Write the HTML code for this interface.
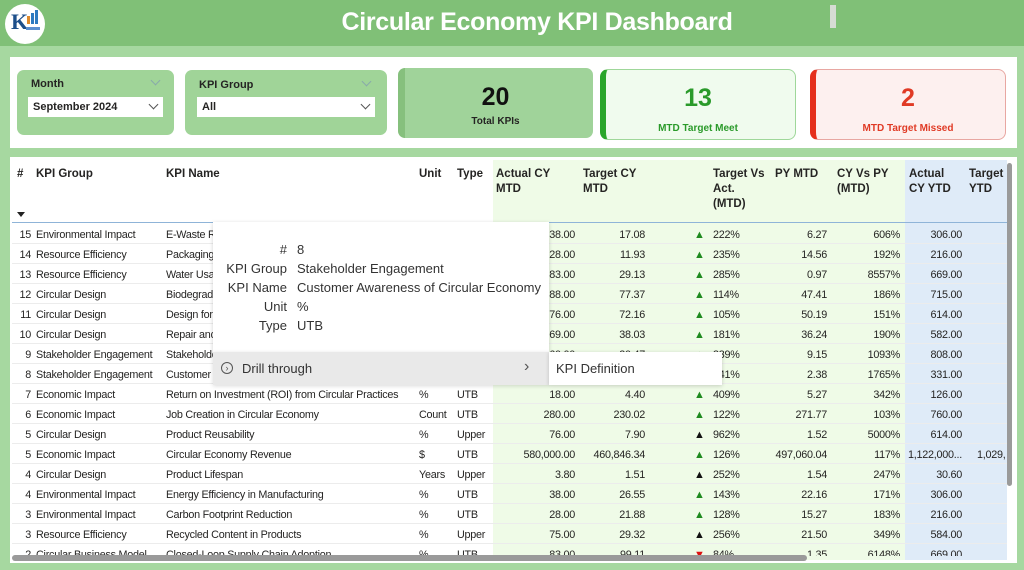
<!DOCTYPE html>
<html><head><meta charset="utf-8"><style>
*{margin:0;padding:0;box-sizing:border-box}
body{width:1024px;height:570px;overflow:hidden;background:#a6d8a0;font-family:"Liberation Sans",sans-serif;color:#252423;position:relative}
.abs{position:absolute}
.hdr{left:0;top:0;width:1024px;height:46px;background:#80c077}
.title{left:0;width:1074px;top:8px;text-align:center;color:#fff;font-size:25px;font-weight:bold;letter-spacing:-0.3px}
.panel{background:#fff}
.slicer{background:#a0d498;border-radius:7px}
.sl-l{font-size:11px;font-weight:bold}
.sl-b{background:#fff;font-size:11px;font-weight:bold;height:20px;padding:4px 5px}
.chev{width:7px;height:7px;border-right:1px solid #555;border-bottom:1px solid #555;transform:rotate(45deg)}
.row{position:absolute;left:12px;width:995px;height:20px;font-size:10.8px;letter-spacing:-0.25px;border-bottom:1px solid #ececec;line-height:19px}
.row div{position:absolute;top:2px;white-space:nowrap}
.r{text-align:right}
.h{position:absolute;font-size:11.5px;font-weight:bold;line-height:15px}
.up{color:#1f8a1f;font-size:11px}
.bk{color:#111;font-size:11px}
.dn{color:#d11;font-size:11px}
</style></head><body>
<div class="abs hdr"></div>
<div class="abs" style="left:5px;top:4px;width:40px;height:40px;border-radius:50%;background:#fff"></div>
<div class="abs" style="left:11px;top:9px;font:bold 22px 'Liberation Serif',serif;color:#1d4f8a">K</div>
<div class="abs" style="left:27px;top:16px;width:3px;height:8px;background:#e08a2a"></div>
<div class="abs" style="left:31px;top:13px;width:3px;height:11px;background:#2d7ac0"></div>
<div class="abs" style="left:35px;top:10px;width:3px;height:14px;background:#2d7ac0"></div>
<div class="abs" style="left:26px;top:27px;width:14px;height:3px;background:#5a8fd0"></div>
<div class="abs title">Circular Economy KPI Dashboard</div>
<div class="abs" style="left:830px;top:5px;width:6px;height:23px;background:#d6dcd4"></div>

<div class="abs panel" style="left:10px;top:57px;width:1007px;height:91px"></div>
<div class="abs slicer" style="left:17px;top:70px;width:157px;height:65px"></div>
<div class="abs sl-l" style="left:31px;top:78px">Month</div>
<div class="abs chev" style="left:152px;top:77px;border-color:#8aa"></div>
<div class="abs sl-b" style="left:28px;top:97px;width:135px">September 2024</div>
<div class="abs chev" style="left:150px;top:101px"></div>
<div class="abs slicer" style="left:185px;top:70px;width:202px;height:65px"></div>
<div class="abs sl-l" style="left:199px;top:79px">KPI Group</div>
<div class="abs chev" style="left:363px;top:78px;border-color:#8aa"></div>
<div class="abs sl-b" style="left:197px;top:97px;width:178px">All</div>
<div class="abs chev" style="left:362px;top:101px"></div>

<div class="abs" style="left:398px;top:68px;width:195px;height:70px;background:#a0d39a;border-radius:7px;border-left:7px solid #86c07d"></div>
<div class="abs" style="left:398px;top:83px;width:195px;text-align:center;font-size:25px;font-weight:bold;color:#111">20</div>
<div class="abs" style="left:398px;top:116px;width:195px;text-align:center;font-size:10px;font-weight:bold">Total KPIs</div>

<div class="abs" style="left:600px;top:69px;width:196px;height:71px;background:#f0fbee;border:1px solid #9fd79a;border-left:6px solid #2aa52a;border-radius:8px"></div>
<div class="abs" style="left:600px;top:84px;width:196px;text-align:center;font-size:25px;font-weight:bold;color:#2a9a2a">13</div>
<div class="abs" style="left:600px;top:123px;width:196px;text-align:center;font-size:10px;font-weight:bold;color:#2a9a2a">MTD Target Meet</div>

<div class="abs" style="left:810px;top:69px;width:196px;height:71px;background:#fdf0ef;border:1px solid #e8a7a2;border-left:6px solid #e5301d;border-radius:8px"></div>
<div class="abs" style="left:810px;top:84px;width:196px;text-align:center;font-size:25px;font-weight:bold;color:#e03a25">2</div>
<div class="abs" style="left:810px;top:123px;width:196px;text-align:center;font-size:10px;font-weight:bold;color:#e03a25">MTD Target Missed</div>

<div class="abs panel" style="left:10px;top:157px;width:1007px;height:406px"></div>
<div class="abs" style="left:493px;top:160px;width:412px;height:400px;background:#effbe7"></div>
<div class="abs" style="left:905px;top:160px;width:102px;height:400px;background:#dfebf8"></div>

<div class="h" style="left:17px;top:167px">#</div>
<div class="h" style="left:36px;top:167px">KPI Group</div>
<div class="h" style="left:166px;top:167px">KPI Name</div>
<div class="h" style="left:419px;top:167px">Unit</div>
<div class="h" style="left:457px;top:167px">Type</div>
<div class="h" style="left:496px;top:167px">Actual CY<br>MTD</div>
<div class="h" style="left:583px;top:167px">Target CY<br>MTD</div>
<div class="h" style="left:713px;top:167px">Target Vs<br>Act.<br>(MTD)</div>
<div class="h" style="left:775px;top:167px">PY MTD</div>
<div class="h" style="left:837px;top:167px">CY Vs PY<br>(MTD)</div>
<div class="h" style="left:909px;top:167px">Actual<br>CY YTD</div>
<div class="h" style="left:969px;top:167px">Target<br>YTD</div>
<div class="abs" style="left:17px;top:212px;width:0;height:0;border-left:4px solid transparent;border-right:4px solid transparent;border-top:5px solid #222"></div>
<div class="abs" style="left:12px;top:222px;width:995px;height:1px;background:#8fb4d8"></div>

<div class="row" style="top:224px"><div class="r" style="left:0;width:19px">15</div><div style="left:24px">Environmental Impact</div><div style="left:154px">E-Waste Reduction</div><div class="r" style="left:483px;width:80px">38.00</div><div class="r" style="left:565px;width:68px">17.08</div><div style="left:682px" class="up">▲</div><div style="left:701px">222%</div><div class="r" style="left:748px;width:67px">6.27</div><div class="r" style="left:818px;width:70px">606%</div><div class="r" style="left:893px;width:57px">306.00</div></div>
<div class="row" style="top:244px"><div class="r" style="left:0;width:19px">14</div><div style="left:24px">Resource Efficiency</div><div style="left:154px">Packaging Waste</div><div class="r" style="left:483px;width:80px">28.00</div><div class="r" style="left:565px;width:68px">11.93</div><div style="left:682px" class="up">▲</div><div style="left:701px">235%</div><div class="r" style="left:748px;width:67px">14.56</div><div class="r" style="left:818px;width:70px">192%</div><div class="r" style="left:893px;width:57px">216.00</div></div>
<div class="row" style="top:264px"><div class="r" style="left:0;width:19px">13</div><div style="left:24px">Resource Efficiency</div><div style="left:154px">Water Usage</div><div class="r" style="left:483px;width:80px">83.00</div><div class="r" style="left:565px;width:68px">29.13</div><div style="left:682px" class="up">▲</div><div style="left:701px">285%</div><div class="r" style="left:748px;width:67px">0.97</div><div class="r" style="left:818px;width:70px">8557%</div><div class="r" style="left:893px;width:57px">669.00</div></div>
<div class="row" style="top:284px"><div class="r" style="left:0;width:19px">12</div><div style="left:24px">Circular Design</div><div style="left:154px">Biodegradable</div><div class="r" style="left:483px;width:80px">88.00</div><div class="r" style="left:565px;width:68px">77.37</div><div style="left:682px" class="up">▲</div><div style="left:701px">114%</div><div class="r" style="left:748px;width:67px">47.41</div><div class="r" style="left:818px;width:70px">186%</div><div class="r" style="left:893px;width:57px">715.00</div></div>
<div class="row" style="top:304px"><div class="r" style="left:0;width:19px">11</div><div style="left:24px">Circular Design</div><div style="left:154px">Design for</div><div class="r" style="left:483px;width:80px">76.00</div><div class="r" style="left:565px;width:68px">72.16</div><div style="left:682px" class="up">▲</div><div style="left:701px">105%</div><div class="r" style="left:748px;width:67px">50.19</div><div class="r" style="left:818px;width:70px">151%</div><div class="r" style="left:893px;width:57px">614.00</div></div>
<div class="row" style="top:324px"><div class="r" style="left:0;width:19px">10</div><div style="left:24px">Circular Design</div><div style="left:154px">Repair and</div><div class="r" style="left:483px;width:80px">69.00</div><div class="r" style="left:565px;width:68px">38.03</div><div style="left:682px" class="up">▲</div><div style="left:701px">181%</div><div class="r" style="left:748px;width:67px">36.24</div><div class="r" style="left:818px;width:70px">190%</div><div class="r" style="left:893px;width:57px">582.00</div></div>
<div class="row" style="top:344px"><div class="r" style="left:0;width:19px">9</div><div style="left:24px">Stakeholder Engagement</div><div style="left:154px">Stakeholder</div><div class="r" style="left:483px;width:80px">60.00</div><div class="r" style="left:565px;width:68px">20.47</div><div style="left:682px" class="up">▲</div><div style="left:701px">339%</div><div class="r" style="left:748px;width:67px">9.15</div><div class="r" style="left:818px;width:70px">1093%</div><div class="r" style="left:893px;width:57px">808.00</div></div>
<div class="row" style="top:364px"><div class="r" style="left:0;width:19px">8</div><div style="left:24px">Stakeholder Engagement</div><div style="left:154px">Customer</div><div class="r" style="left:483px;width:80px">42.00</div><div class="r" style="left:565px;width:68px">17.40</div><div style="left:682px" class="up">▲</div><div style="left:701px">241%</div><div class="r" style="left:748px;width:67px">2.38</div><div class="r" style="left:818px;width:70px">1765%</div><div class="r" style="left:893px;width:57px">331.00</div></div>
<div class="row" style="top:384px"><div class="r" style="left:0;width:19px">7</div><div style="left:24px">Economic Impact</div><div style="left:154px">Return on Investment (ROI) from Circular Practices</div><div style="left:407px">%</div><div style="left:445px">UTB</div><div class="r" style="left:483px;width:80px">18.00</div><div class="r" style="left:565px;width:68px">4.40</div><div style="left:682px" class="up">▲</div><div style="left:701px">409%</div><div class="r" style="left:748px;width:67px">5.27</div><div class="r" style="left:818px;width:70px">342%</div><div class="r" style="left:893px;width:57px">126.00</div></div>
<div class="row" style="top:404px"><div class="r" style="left:0;width:19px">6</div><div style="left:24px">Economic Impact</div><div style="left:154px">Job Creation in Circular Economy</div><div style="left:407px">Count</div><div style="left:445px">UTB</div><div class="r" style="left:483px;width:80px">280.00</div><div class="r" style="left:565px;width:68px">230.02</div><div style="left:682px" class="up">▲</div><div style="left:701px">122%</div><div class="r" style="left:748px;width:67px">271.77</div><div class="r" style="left:818px;width:70px">103%</div><div class="r" style="left:893px;width:57px">760.00</div></div>
<div class="row" style="top:424px"><div class="r" style="left:0;width:19px">5</div><div style="left:24px">Circular Design</div><div style="left:154px">Product Reusability</div><div style="left:407px">%</div><div style="left:445px">Upper</div><div class="r" style="left:483px;width:80px">76.00</div><div class="r" style="left:565px;width:68px">7.90</div><div style="left:682px" class="bk">▲</div><div style="left:701px">962%</div><div class="r" style="left:748px;width:67px">1.52</div><div class="r" style="left:818px;width:70px">5000%</div><div class="r" style="left:893px;width:57px">614.00</div></div>
<div class="row" style="top:444px"><div class="r" style="left:0;width:19px">5</div><div style="left:24px">Economic Impact</div><div style="left:154px">Circular Economy Revenue</div><div style="left:407px">$</div><div style="left:445px">UTB</div><div class="r" style="left:483px;width:80px">580,000.00</div><div class="r" style="left:565px;width:68px">460,846.34</div><div style="left:682px" class="up">▲</div><div style="left:701px">126%</div><div class="r" style="left:748px;width:67px">497,060.04</div><div class="r" style="left:818px;width:70px">117%</div><div class="r" style="left:890px;width:60px">1,122,000...</div><div style="left:965px">1,029,</div></div>
<div class="row" style="top:464px"><div class="r" style="left:0;width:19px">4</div><div style="left:24px">Circular Design</div><div style="left:154px">Product Lifespan</div><div style="left:407px">Years</div><div style="left:445px">Upper</div><div class="r" style="left:483px;width:80px">3.80</div><div class="r" style="left:565px;width:68px">1.51</div><div style="left:682px" class="bk">▲</div><div style="left:701px">252%</div><div class="r" style="left:748px;width:67px">1.54</div><div class="r" style="left:818px;width:70px">247%</div><div class="r" style="left:893px;width:57px">30.60</div></div>
<div class="row" style="top:484px"><div class="r" style="left:0;width:19px">4</div><div style="left:24px">Environmental Impact</div><div style="left:154px">Energy Efficiency in Manufacturing</div><div style="left:407px">%</div><div style="left:445px">UTB</div><div class="r" style="left:483px;width:80px">38.00</div><div class="r" style="left:565px;width:68px">26.55</div><div style="left:682px" class="up">▲</div><div style="left:701px">143%</div><div class="r" style="left:748px;width:67px">22.16</div><div class="r" style="left:818px;width:70px">171%</div><div class="r" style="left:893px;width:57px">306.00</div></div>
<div class="row" style="top:504px"><div class="r" style="left:0;width:19px">3</div><div style="left:24px">Environmental Impact</div><div style="left:154px">Carbon Footprint Reduction</div><div style="left:407px">%</div><div style="left:445px">UTB</div><div class="r" style="left:483px;width:80px">28.00</div><div class="r" style="left:565px;width:68px">21.88</div><div style="left:682px" class="up">▲</div><div style="left:701px">128%</div><div class="r" style="left:748px;width:67px">15.27</div><div class="r" style="left:818px;width:70px">183%</div><div class="r" style="left:893px;width:57px">216.00</div></div>
<div class="row" style="top:524px"><div class="r" style="left:0;width:19px">3</div><div style="left:24px">Resource Efficiency</div><div style="left:154px">Recycled Content in Products</div><div style="left:407px">%</div><div style="left:445px">Upper</div><div class="r" style="left:483px;width:80px">75.00</div><div class="r" style="left:565px;width:68px">29.32</div><div style="left:682px" class="bk">▲</div><div style="left:701px">256%</div><div class="r" style="left:748px;width:67px">21.50</div><div class="r" style="left:818px;width:70px">349%</div><div class="r" style="left:893px;width:57px">584.00</div></div>
<div class="row" style="top:544px;height:12px;overflow:hidden;border:0"><div class="r" style="left:0;width:19px">2</div><div style="left:24px">Circular Business Model</div><div style="left:154px">Closed-Loop Supply Chain Adoption</div><div style="left:407px">%</div><div style="left:445px">UTB</div><div class="r" style="left:483px;width:80px">83.00</div><div class="r" style="left:565px;width:68px">99.11</div><div style="left:682px" class="dn">▼</div><div style="left:701px">84%</div><div class="r" style="left:748px;width:67px">1.35</div><div class="r" style="left:818px;width:70px">6148%</div><div class="r" style="left:893px;width:57px">669.00</div></div>

<div class="abs" style="left:12px;top:555px;width:795px;height:6px;background:#9a9a9a;border-radius:3px"></div>
<div class="abs" style="left:1007px;top:163px;width:5px;height:323px;background:#9a9a9a;border-radius:3px"></div>

<div class="abs" style="left:213px;top:222px;width:336px;height:130px;background:#fff;box-shadow:0 1px 4px rgba(0,0,0,.18)"></div>
<div class="abs" style="left:213px;top:240px;width:74px;text-align:right;font-size:13px;line-height:19px;color:#333">#<br>KPI Group<br>KPI Name<br>Unit<br>Type</div>
<div class="abs" style="left:297px;top:240px;font-size:13px;line-height:19px;color:#333;white-space:nowrap">8<br>Stakeholder Engagement<br>Customer Awareness of Circular Economy<br>%<br>UTB</div>
<div class="abs" style="left:213px;top:352px;width:336px;height:33px;background:#e9e9e9;box-shadow:0 1px 4px rgba(0,0,0,.15)"></div>
<div class="abs" style="left:221px;top:362px;width:12px;height:12px;border:1px solid #555;border-radius:50%;font-size:9px;line-height:10px;text-align:center;color:#555">›</div>
<div class="abs" style="left:242px;top:361px;font-size:13px;color:#333">Drill through</div>
<div class="abs" style="left:524px;top:358px;font-size:16px;color:#555">›</div>
<div class="abs" style="left:549px;top:352px;width:173px;height:33px;background:#fff;box-shadow:0 1px 4px rgba(0,0,0,.18)"></div>
<div class="abs" style="left:556px;top:361px;font-size:13px;color:#333">KPI Definition</div>
</body></html>
